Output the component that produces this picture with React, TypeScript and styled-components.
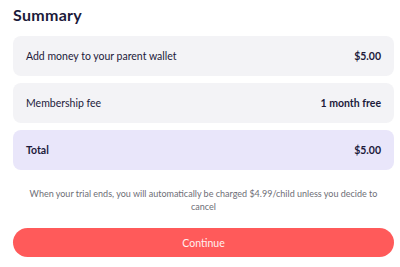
import React, { FC } from "react"
import styled, { createGlobalStyle } from "styled-components"

const GlobalStyle = createGlobalStyle`
  html, body {
    margin: 0;
    padding: 0;
    background: rgb(255, 255, 255);
  }
  body {
    font-family: "Lato", "Noto Sans", sans-serif;
  }
`

const Page = styled.main`
  width: 400px;
  height: 267px;
  box-sizing: border-box;
  padding: 5px 6px 0 13px;
  display: flex;
  flex-direction: column;
`

const Title = styled.h1`
  margin: 0;
  font-size: 16px;
  line-height: 20px;
  font-weight: 700;
  color: rgb(28, 26, 58);
  letter-spacing: 0.3px;
`

const List = styled.div`
  margin-top: 11px;
  display: flex;
  flex-direction: column;
  gap: 7px;
`

const Row = styled.div<{ highlight?: boolean }>`
  height: 40px;
  box-sizing: border-box;
  padding: 0 13px;
  display: flex;
  align-items: center;
  justify-content: space-between;
  border-radius: 8px;
  background: ${p => (p.highlight ? "rgb(233, 230, 250)" : "rgb(243, 243, 246)")};
  font-size: 10.5px;
  color: rgb(28, 26, 58);
`

const Label = styled.span<{ strong?: boolean }>`
  font-weight: ${p => (p.strong ? 700 : 400)};
`

const Value = styled.span`
  font-weight: 700;
`

const Note = styled.p`
  margin: 17px 10px 0;
  text-align: center;
  font-size: 9px;
  line-height: 13px;
  color: rgb(110, 110, 118);
`

const Button = styled.button`
  margin-top: 15px;
  height: 29px;
  border: 0;
  border-radius: 15px;
  background: rgb(255, 90, 90);
  color: rgb(255, 240, 240);
  font-family: inherit;
  font-size: 10.5px;
  cursor: pointer;
`

const rows = [
  { label: "Add money to your parent wallet", value: "$5.00" },
  { label: "Membership fee", value: "1 month free" }
]

const App: FC = () => {
  return (
    <Page>
      <GlobalStyle />
      <Title>Summary</Title>
      <List>
        {rows.map(r => (
          <Row key={r.label}>
            <Label>{r.label}</Label>
            <Value>{r.value}</Value>
          </Row>
        ))}
        <Row highlight>
          <Label strong>Total</Label>
          <Value>$5.00</Value>
        </Row>
      </List>
      <Note>
        When your trial ends, you will automatically be charged $4.99/child unless you decide to
        cancel
      </Note>
      <Button>Continue</Button>
    </Page>
  )
}

export default App
